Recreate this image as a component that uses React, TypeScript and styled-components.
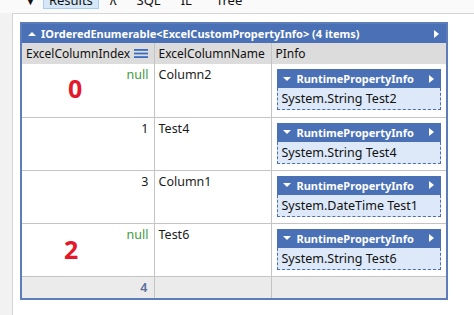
import React from 'react';
import styled, { createGlobalStyle } from 'styled-components';

const GlobalStyle = createGlobalStyle`
  html, body {
    margin: 0;
    padding: 0;
    background: #ffffff;
  }
  body {
    font-family: 'Noto Sans', 'Open Sans', sans-serif;
    font-size: 12px;
    color: #1b1b1b;
  }
`;

const Page = styled.div`
  display: flex;
  flex-direction: column;
  width: 474px;
  height: 315px;
  overflow: hidden;
`;

const TabBar = styled.div`
  display: flex;
  align-items: flex-end;
  height: 13px;
  padding: 0 0 4px 18px;
  box-sizing: border-box;
  overflow: hidden;
  background: #fafafa;
`;

const Tab = styled.div<{ $active?: boolean; $gap?: number }>`
  line-height: 15px;
  padding: 0 5px;
  margin-left: ${({ $gap }) => $gap ?? 0}px;
  font-size: 13px;
  color: #111;
  background: ${({ $active }) => ($active ? '#d6e8f8' : 'transparent')};
  border: 1px solid ${({ $active }) => ($active ? '#a9cdef' : 'transparent')};
`;

const Main = styled.div`
  flex: 1;
  display: flex;
`;

const Gutter = styled.div`
  width: 12px;
  background: #f2f2f2;
  border-right: 1px solid #d4d4d4;
`;

const Content = styled.div`
  flex: 1;
  border-top: 1px solid #d4d4d4;
  padding: 8px 0 0 7px;
`;

const Grid = styled.table`
  border-collapse: collapse;
  border: 2px solid #5c7cba;
  width: 426px;
  table-layout: fixed;
`;

const TitleCell = styled.th`
  background: #4a71b5;
  color: #ffffff;
  font-weight: 700;
  font-size: 11px;
  text-align: left;
  height: 19px;
  padding: 0 6px;
  white-space: nowrap;
`;

const TitleRow = styled.div`
  display: flex;
  align-items: center;
  gap: 5px;
  svg {
    flex-shrink: 0;
  }
`;

const Grow = styled.span`
  flex: 1;
  white-space: nowrap;
`;

const HeadCell = styled.th`
  background: #dcdcdc;
  font-weight: 400;
  font-size: 12px;
  color: #111;
  text-align: left;
  height: 21px;
  padding: 0 6px 0 4px;
  border-right: 1px solid #c4c4c4;
  white-space: nowrap;
`;

const HeadInner = styled.div`
  display: flex;
  align-items: center;
  justify-content: space-between;
  svg {
    flex-shrink: 0;
  }
`;

const Cell = styled.td<{ $num?: boolean }>`
  position: relative;
  vertical-align: top;
  height: 53px;
  padding: 2px 5px 0 4px;
  box-sizing: border-box;
  border-right: 1px solid #c4c4c4;
  border-bottom: 1px solid #c4c4c4;
  text-align: ${({ $num }) => ($num ? 'right' : 'left')};
  font-size: 12.5px;
  line-height: 17px;
`;

const NestCell = styled.td`
  vertical-align: top;
  padding: 5px 5px 5px 5px;
  border-bottom: 1px solid #c4c4c4;
`;

const Null = styled.span`
  color: #3f9a3f;
`;

const Marker = styled.span<{ $left: number; $top: number }>`
  position: absolute;
  left: ${({ $left }) => $left}px;
  top: ${({ $top }) => $top}px;
  color: #e5172a;
  font-weight: 700;
  font-size: 25px;
  line-height: 1;
`;

const Footer = styled.td<{ $num?: boolean }>`
  background: #ebebeb;
  height: 21px;
  padding: 0 6px 0 4px;
  border-right: 1px solid #c4c4c4;
  text-align: ${({ $num }) => ($num ? 'right' : 'left')};
  color: #5a6e9e;
  font-weight: 600;
  font-size: 12.5px;
`;

const Nest = styled.div`
  width: 164px;
`;

const NestHead = styled.div`
  display: flex;
  align-items: center;
  gap: 6px;
  height: 19px;
  padding: 0 6px;
  background: #4a71b5;
  color: #fff;
  font-weight: 700;
  font-size: 11px;
  svg {
    flex-shrink: 0;
  }
`;

const NestBody = styled.div`
  height: 22px;
  padding: 0 4px;
  display: flex;
  align-items: center;
  background: #dde9f8;
  border: 1px dashed #4a6fb2;
  border-top: none;
  box-sizing: border-box;
  font-size: 12.5px;
  color: #111;
`;

const Tri = ({ dir }: { dir: 'up' | 'down' | 'right' }) => {
  const pts =
    dir === 'up' ? '0,5 4,1 8,5' : dir === 'down' ? '0,1 8,1 4,5' : '1,0 6,4 1,8';
  const w = dir === 'right' ? 7 : 8;
  const h = dir === 'right' ? 8 : 6;
  return (
    <svg width={w} height={h} viewBox={`0 0 ${w} ${h}`}>
      <polygon points={pts} fill="#ffffff" />
    </svg>
  );
};

const Menu = () => (
  <svg width="14" height="9" viewBox="0 0 14 9">
    <rect x="0" y="0" width="14" height="1.8" fill="#3a6cc0" />
    <rect x="0" y="3.6" width="14" height="1.8" fill="#3a6cc0" />
    <rect x="0" y="7.2" width="14" height="1.8" fill="#3a6cc0" />
  </svg>
);

type Row = { index: number | null; name: string; info: string; mark?: string; markLeft?: number; markTop?: number };

const rows: Row[] = [
  { index: null, name: 'Column2', info: 'System.String Test2', mark: '0', markLeft: 46, markTop: 12 },
  { index: 1, name: 'Test4', info: 'System.String Test4' },
  { index: 3, name: 'Column1', info: 'System.DateTime Test1' },
  { index: null, name: 'Test6', info: 'System.String Test6', mark: '2', markLeft: 42, markTop: 13 },
];

function PropertyBox({ text }: { text: string }) {
  return (
    <Nest>
      <NestHead>
        <Tri dir="down" />
        <Grow>RuntimePropertyInfo</Grow>
        <Tri dir="right" />
      </NestHead>
      <NestBody>{text}</NestBody>
    </Nest>
  );
}

export default function App() {
  return (
    <>
      <GlobalStyle />
      <Page>
        <TabBar>
          <Tab>▼</Tab>
          <Tab $active>Results</Tab>
          <Tab $gap={5}>λ</Tab>
          <Tab $gap={8}>SQL</Tab>
          <Tab $gap={8}>IL</Tab>
          <Tab $gap={12}>Tree</Tab>
        </TabBar>
        <Main>
          <Gutter />
          <Content>
            <Grid>
              <colgroup>
                <col style={{ width: 133 }} />
                <col style={{ width: 117 }} />
                <col style={{ width: 176 }} />
              </colgroup>
              <thead>
                <tr>
                  <TitleCell colSpan={3}>
                    <TitleRow>
                      <Tri dir="up" />
                      <Grow>IOrderedEnumerable&lt;ExcelCustomPropertyInfo&gt; (4 items)</Grow>
                      <Tri dir="right" />
                    </TitleRow>
                  </TitleCell>
                </tr>
                <tr>
                  <HeadCell>
                    <HeadInner>
                      ExcelColumnIndex
                      <Menu />
                    </HeadInner>
                  </HeadCell>
                  <HeadCell>ExcelColumnName</HeadCell>
                  <HeadCell>PInfo</HeadCell>
                </tr>
              </thead>
              <tbody>
                {rows.map((r, i) => (
                  <tr key={i}>
                    <Cell $num>
                      {r.index === null ? <Null>null</Null> : r.index}
                      {r.mark && (
                        <Marker $left={r.markLeft ?? 0} $top={r.markTop ?? 0}>
                          {r.mark}
                        </Marker>
                      )}
                    </Cell>
                    <Cell>{r.name}</Cell>
                    <NestCell>
                      <PropertyBox text={r.info} />
                    </NestCell>
                  </tr>
                ))}
                <tr>
                  <Footer $num>4</Footer>
                  <Footer />
                  <Footer />
                </tr>
              </tbody>
            </Grid>
          </Content>
        </Main>
      </Page>
    </>
  );
}
